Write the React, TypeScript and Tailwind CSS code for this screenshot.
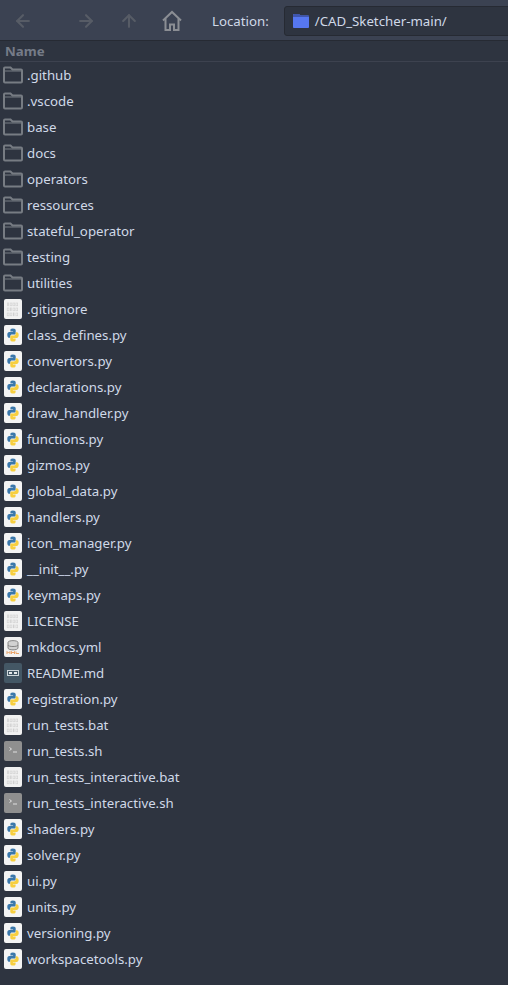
import { ArrowLeft, ArrowRight, ArrowUp } from 'lucide-react';

type Kind = 'folder' | 'py' | 'text' | 'yml' | 'md' | 'sh';

const entries: [string, Kind][] = [
  ['.github', 'folder'],
  ['.vscode', 'folder'],
  ['base', 'folder'],
  ['docs', 'folder'],
  ['operators', 'folder'],
  ['ressources', 'folder'],
  ['stateful_operator', 'folder'],
  ['testing', 'folder'],
  ['utilities', 'folder'],
  ['.gitignore', 'text'],
  ['class_defines.py', 'py'],
  ['convertors.py', 'py'],
  ['declarations.py', 'py'],
  ['draw_handler.py', 'py'],
  ['functions.py', 'py'],
  ['gizmos.py', 'py'],
  ['global_data.py', 'py'],
  ['handlers.py', 'py'],
  ['icon_manager.py', 'py'],
  ['__init__.py', 'py'],
  ['keymaps.py', 'py'],
  ['LICENSE', 'text'],
  ['mkdocs.yml', 'yml'],
  ['README.md', 'md'],
  ['registration.py', 'py'],
  ['run_tests.bat', 'text'],
  ['run_tests.sh', 'sh'],
  ['run_tests_interactive.bat', 'text'],
  ['run_tests_interactive.sh', 'sh'],
  ['shaders.py', 'py'],
  ['solver.py', 'py'],
  ['ui.py', 'py'],
  ['units.py', 'py'],
  ['versioning.py', 'py'],
  ['workspacetools.py', 'py'],
];

const FolderIcon = () => (
  <svg width="20" height="18" viewBox="0 0 20 18" fill="none">
    <path
      d="M1 15.5V2.5C1 1.9 1.4 1.5 2 1.5H7.5L9.5 3.5H18C18.6 3.5 19 3.9 19 4.5V15.5C19 16.1 18.6 16.5 18 16.5H2C1.4 16.5 1 16.1 1 15.5Z"
      stroke="#777c83"
      strokeWidth="2"
    />
    <path d="M1 5H19" stroke="#777c83" strokeWidth="1" />
  </svg>
);

const PyIcon = () => (
  <svg width="20" height="22" viewBox="0 0 20 22">
    <rect x="1" y="1" width="18" height="20" rx="2" fill="#f4f4f4" />
    <path
      d="M9.9 4.5C7.5 4.5 7.4 5.5 7.4 6.3V7.6H10.1V8.1H6.3C5.1 8.1 4.3 9 4.3 10.9C4.3 12.8 5.1 13.7 6.2 13.7H7.3V12.2C7.3 11.2 8.1 10.5 9 10.5H11.5C12.3 10.5 12.7 10 12.7 9.2V6.3C12.7 5.4 11.9 4.5 9.9 4.5Z"
      fill="#3b78ab"
    />
    <path
      d="M10.1 17.5C12.5 17.5 12.6 16.5 12.6 15.7V14.4H9.9V13.9H13.7C14.9 13.9 15.7 13 15.7 11.1C15.7 9.2 14.9 8.3 13.8 8.3H12.7V9.8C12.7 10.8 11.9 11.5 11 11.5H8.5C7.7 11.5 7.3 12 7.3 12.8V15.7C7.3 16.6 8.1 17.5 10.1 17.5Z"
      fill="#f7cf3f"
    />
  </svg>
);

// binary digits drawn as tiny strokes, like the text-file icon
const digitRows = ['1000', '0100', '0010'];

const TextIcon = () => (
  <svg width="20" height="22" viewBox="0 0 20 22">
    <rect x="1" y="1" width="18" height="20" rx="2" fill="#f1f1f1" />
    {digitRows.map((row, r) =>
      row.split('').map((d, c) =>
        d === '1' ? (
          <rect key={`${r}-${c}`} x={4.5 + c * 2.9} y={4.5 + r * 5} width="1" height="3.6" fill="#c2c2c2" />
        ) : (
          <rect key={`${r}-${c}`} x={4.2 + c * 2.9} y={5 + r * 5} width="1.8" height="2.8" fill="none" stroke="#cfcfcf" strokeWidth="0.6" />
        ),
      ),
    )}
  </svg>
);

const YmlIcon = () => (
  <svg width="20" height="22" viewBox="0 0 20 22">
    <rect x="1" y="1" width="18" height="20" rx="2" fill="#f1f1f1" />
    <path d="M5 6.5C5 4 15 4 15 6.5V12C15 14.5 5 14.5 5 12Z" fill="#d2d2d2" stroke="#7a7a7a" strokeWidth="0.9" />
    <path d="M5 9C5 11 15 11 15 9" fill="none" stroke="#7a7a7a" strokeWidth="0.9" />
    <path d="M4 18V15.5L5.5 17L7 15.5V18M8.5 18V15.5L10 17L11.5 15.5V18M13 15.5V17.5H16" fill="none" stroke="#e79a5a" strokeWidth="0.9" />
  </svg>
);

const MdIcon = () => (
  <svg width="20" height="22" viewBox="0 0 20 22">
    <rect x="1" y="1" width="18" height="20" rx="2" fill="#445765" />
    <rect x="4.5" y="8.5" width="11" height="5" fill="none" stroke="#cfd6da" strokeWidth="1" />
    <rect x="6" y="10" width="3" height="2" fill="#e6eaec" />
    <rect x="11" y="10" width="3" height="2" fill="#e6eaec" />
  </svg>
);

const ShIcon = () => (
  <svg width="20" height="22" viewBox="0 0 20 22">
    <rect x="1" y="1" width="18" height="20" rx="2" fill="#8f8f8f" />
    <path d="M6.5 7.5L8.5 9L6.5 10.5" stroke="#e0e0e0" strokeWidth="1" fill="none" />
    <rect x="10" y="11.5" width="4" height="1" fill="#e0e0e0" />
  </svg>
);

const icons: Record<Kind, () => React.JSX.Element> = {
  folder: FolderIcon,
  py: PyIcon,
  text: TextIcon,
  yml: YmlIcon,
  md: MdIcon,
  sh: ShIcon,
};

const App = () => {
  return (
    <div className="w-[508px] h-[985px] overflow-hidden bg-[#2e3440] text-[13.25px] text-[#d0d9e8] font-['Noto_Sans',sans-serif]">
      {/* Toolbar */}
      <div className="h-[41px] flex items-center bg-[#3b4252] border-b border-[#262a33]">
        <ArrowLeft className="shrink-0 mt-[2px] ml-[13px] w-[20px] h-[20px] text-[#575c66]" strokeWidth={2.5} />
        <ArrowRight className="shrink-0 mt-[2px] ml-[43px] w-[20px] h-[20px] text-[#575c66]" strokeWidth={2.5} />
        <ArrowUp className="shrink-0 mt-[2px] ml-[23px] w-[20px] h-[20px] text-[#575c66]" strokeWidth={2.5} />
        <svg className="shrink-0 mt-[2px] ml-[23px]" width="20" height="22" viewBox="0 0 20 22" fill="none" stroke="#8b8e94" strokeWidth="2">
          <path d="M1 10.5L10 2L19 10.5" />
          <path d="M3.5 8.5V20H8V14.5H12V20H16.5V8.5" />
        </svg>
        <span className="shrink-0 mt-[4px] ml-[30px]">Location:</span>
        <div className="ml-[15px] mt-[2px] w-[240px] h-[30px] flex items-center bg-[#2e3440] border border-[#262a33] rounded-[3px] shrink-0">
          <svg className="shrink-0 ml-[8px]" width="16" height="14" viewBox="0 0 16 14">
            <path d="M0 1C0 .5.5 0 1 0H6L7.5 1.5H15C15.5 1.5 16 2 16 2.5V13C16 13.5 15.5 14 15 14H1C.5 14 0 13.5 0 13Z" fill="#5677f0" />
            <path d="M0 1C0 .5.5 0 1 0H6L7.5 1.5H15C15.5 1.5 16 2 16 2.5V3H0Z" fill="#3f56ad" />
          </svg>
          <span className="ml-[6px] pt-[2px] whitespace-nowrap">/CAD_Sketcher-main/</span>
        </div>
      </div>

      {/* Column header */}
      <div className="h-[21px] flex items-center pl-[5px] pt-[2px] border-b border-[#3d424f] font-bold text-[#767c88]">
        Name
      </div>

      {/* File list */}
      <div className="flex flex-col">
        {entries.map(([name, kind]) => {
          const Icon = icons[kind];
          return (
            <div key={name} className="h-[26px] flex items-center">
              <div className="w-[27px] pl-[3px] flex items-center">
                <Icon />
              </div>
              <span className="pt-[2px] whitespace-nowrap">{name}</span>
            </div>
          );
        })}
      </div>
    </div>
  );
};

export default App;
